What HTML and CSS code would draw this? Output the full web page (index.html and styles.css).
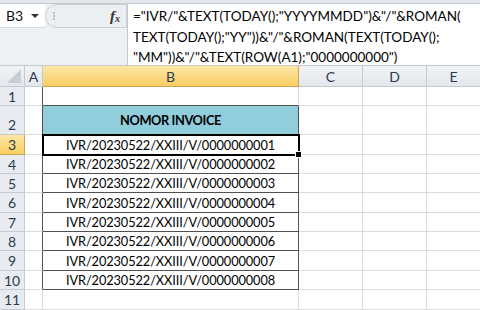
FILE: index.html
```html
<!DOCTYPE html>
<html>
<head>
<meta charset="utf-8">
<link rel="stylesheet" href="styles.css">
</head>
<body>
<div class="app">
  <div class="topstrip"></div>
  <div class="fbar">
    <div class="fleft">
      <div class="fleft-top">
        <div class="namebox"><span class="name">B3</span><span class="drop"></span></div>
        <div class="pill"><span class="grip"></span><span class="fx">f<sub>x</sub></span></div>
      </div>
    </div>
    <div class="formula">="IVR/"&amp;TEXT(TODAY();"YYYYMMDD")&amp;"/"&amp;ROMAN(<br>TEXT(TODAY();"YY"))&amp;"/"&amp;ROMAN(TEXT(TODAY();<br>"MM"))&amp;"/"&amp;TEXT(ROW(A1);"0000000000")</div>
  </div>
  <div class="sheet">
    <div class="hd corner"><svg width="14" height="14" viewBox="0 0 14 14"><polygon points="14,0 14,14 0,14" fill="#c9cdd3"/></svg></div>
    <div class="hd col">A</div>
    <div class="hd col sel">B</div>
    <div class="hd col">C</div>
    <div class="hd col">D</div>
    <div class="hd col last">E</div>

    <div class="hd row">1</div><div class="c ab"></div><div class="c bb"></div><div class="c"></div><div class="c"></div><div class="c last"></div>
    <div class="hd row r2">2</div><div class="c ab"></div><div class="c bt title">NOMOR INVOICE</div><div class="c"></div><div class="c"></div><div class="c last"></div>
    <div class="hd row sel">3</div><div class="c ab"></div><div class="c bt active">IVR/20230522/XXIII/V/0000000001</div><div class="c"></div><div class="c"></div><div class="c last"></div>
    <div class="hd row">4</div><div class="c ab"></div><div class="c bt">IVR/20230522/XXIII/V/0000000002</div><div class="c"></div><div class="c"></div><div class="c last"></div>
    <div class="hd row">5</div><div class="c ab"></div><div class="c bt">IVR/20230522/XXIII/V/0000000003</div><div class="c"></div><div class="c"></div><div class="c last"></div>
    <div class="hd row">6</div><div class="c ab"></div><div class="c bt">IVR/20230522/XXIII/V/0000000004</div><div class="c"></div><div class="c"></div><div class="c last"></div>
    <div class="hd row">7</div><div class="c ab"></div><div class="c bt">IVR/20230522/XXIII/V/0000000005</div><div class="c"></div><div class="c"></div><div class="c last"></div>
    <div class="hd row">8</div><div class="c ab"></div><div class="c bt">IVR/20230522/XXIII/V/0000000006</div><div class="c"></div><div class="c"></div><div class="c last"></div>
    <div class="hd row">9</div><div class="c ab"></div><div class="c bt">IVR/20230522/XXIII/V/0000000007</div><div class="c"></div><div class="c"></div><div class="c last"></div>
    <div class="hd row">10</div><div class="c ab"></div><div class="c bt">IVR/20230522/XXIII/V/0000000008</div><div class="c"></div><div class="c"></div><div class="c last"></div>
    <div class="hd row">11</div><div class="c"></div><div class="c"></div><div class="c"></div><div class="c"></div><div class="c last"></div>
  </div>
</div>
</body>
</html>
```
FILE: styles.css
```css
* { box-sizing: border-box; }
html, body { margin: 0; padding: 0; background: #fff; }
body { width: 480px; height: 310px; overflow: hidden; font-family: Lato, "Open Sans", sans-serif; color: #000; }

.app { display: flex; flex-direction: column; width: 480px; height: 310px; }

.topstrip { height: 4px; flex: none; background: #e3e6ea; border-bottom: 1px solid #c4c9d0; }

.fbar { display: flex; flex: none; height: 62px; background: #eef1f4; border-bottom: 1px solid #c4c9d0; overflow: hidden; }
.fleft { width: 127px; flex: none; }
.fleft-top { display: flex; align-items: stretch; height: 24px; }
.namebox { width: 45px; background: #fff; display: flex; align-items: center; justify-content: space-between; padding: 0 6px 0 6px; border-bottom: 1px solid #d4d8dd; }
.name { font-size: 14px; color: #111; }
.drop { width: 0; height: 0; border-left: 4px solid transparent; border-right: 4px solid transparent; border-top: 4px solid #333; }
.pill { flex: 1; display: flex; align-items: center; justify-content: space-between; background: #eceff2; border: 1px solid #c9cdd3; border-radius: 12px 0 0 12px; padding: 0 6px 0 7px; }
.grip { width: 2px; height: 8px; border-left: 2px dotted #b8bcc3; }
.fx { font-family: "Liberation Serif", serif; font-style: italic; font-weight: bold; font-size: 15px; color: #333; }
.fx sub { font-size: 10px; vertical-align: -1px; }

.formula { flex: 1; background: #fff; border-left: 1px solid #c4c9d0; padding: 2px 0 0 5px; font-size: 13.5px; line-height: 20.5px; white-space: nowrap; color: #000; }

.sheet {
  flex: 1;
  display: grid;
  grid-template-columns: 25px 18px 256px 64px 64px 1fr;
  grid-template-rows: 21px 19px 29px 20px 19px 19px 20px 19px 19px 20px 19px 20px;
}

.hd { background: linear-gradient(#f1f3f6, #e3e7ec); color: #2d3a4f; font-size: 14px; display: flex; align-items: center; justify-content: center; border-right: 1px solid #c6cbd2; border-bottom: 1px solid #c6cbd2; }
.hd.row { background: #e8ecf1; }
.hd.r2 { align-items: flex-end; padding-bottom: 1px; }
.hd.sel { background: linear-gradient(#fde7a5, #f8cd63); border-right-color: #c9a550; border-bottom-color: #c9a550; }
.hd.corner { align-items: flex-end; justify-content: flex-end; padding: 0 3px 3px 0; }
.hd.last, .c.last { border-right: none; }

.c { border-right: 1px solid #dadcdf; border-bottom: 1px solid #dadcdf; font-size: 12.8px; letter-spacing: -0.1px; display: flex; align-items: center; justify-content: center; white-space: nowrap; }
.c.ab { border-right-color: #505050; }
.c.bb { border-bottom-color: #505050; }
.c.bt { border-right-color: #505050; border-bottom-color: #505050; }
.title { background: #92cddc; font-weight: bold; letter-spacing: -0.4px; }
.active { position: relative; outline: 2px solid #000; outline-offset: -1px; z-index: 2; }
.active::after { content: ""; position: absolute; right: -4px; bottom: -4px; width: 5px; height: 5px; background: #000; border: 1px solid #fff; }
```
